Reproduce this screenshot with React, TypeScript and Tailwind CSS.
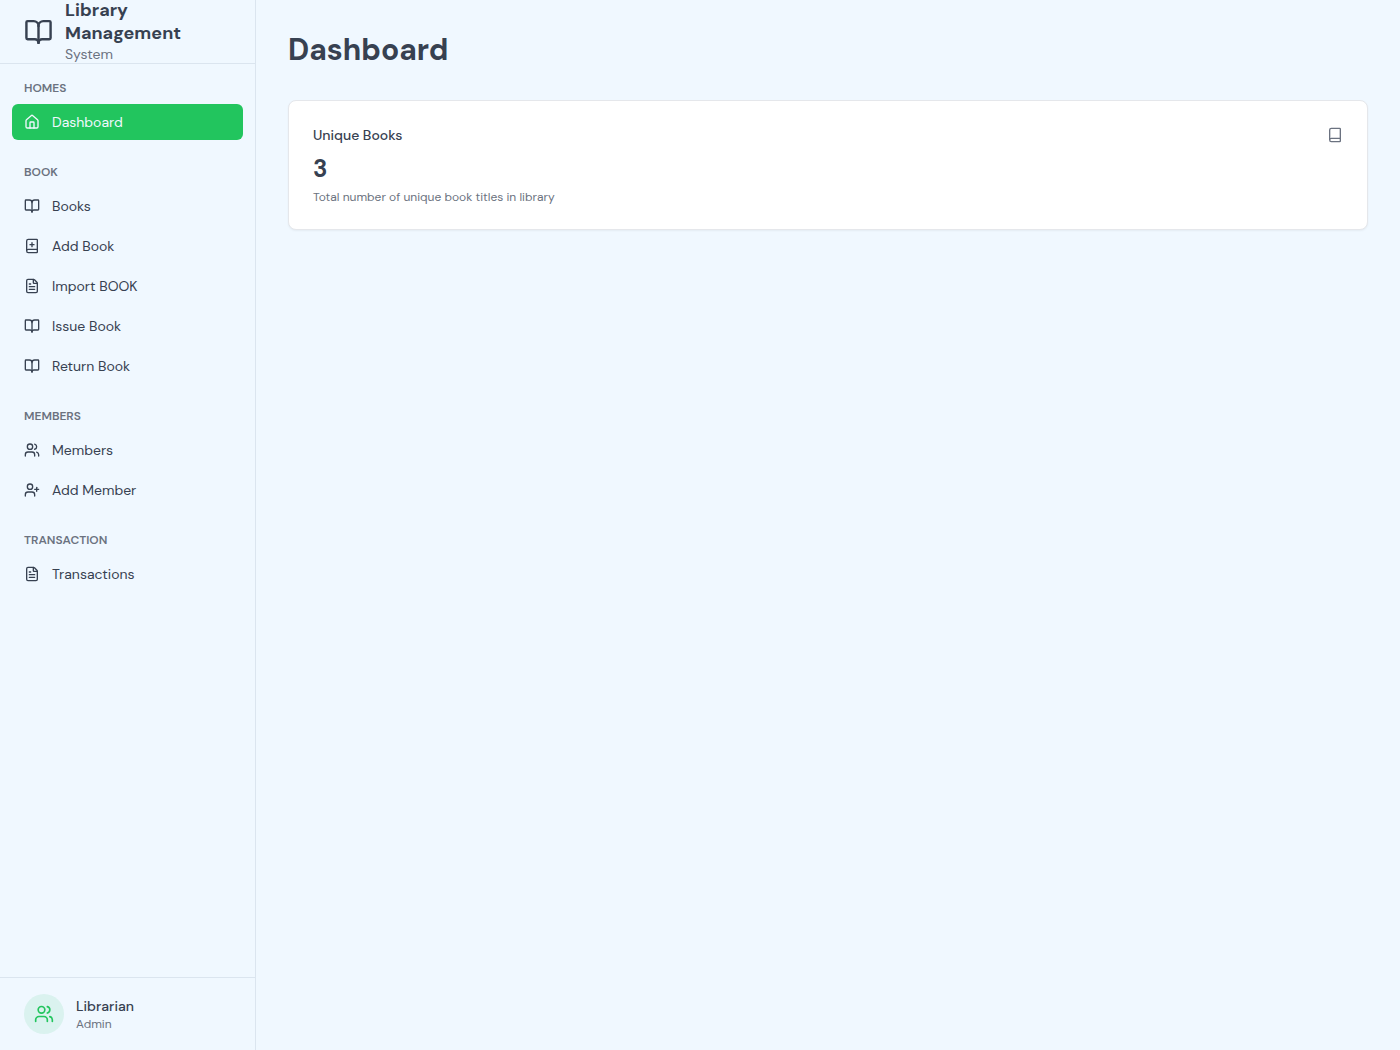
import {
  Book,
  BookOpen,
  BookPlus,
  FileText,
  House,
  UserPlus,
  Users,
  type LucideIcon,
} from 'lucide-react';

interface NavItem {
  label: string;
  icon: LucideIcon;
  active?: boolean;
}

interface NavGroup {
  title: string;
  items: NavItem[];
}

const navGroups: NavGroup[] = [
  { title: 'HOMES', items: [{ label: 'Dashboard', icon: House, active: true }] },
  {
    title: 'BOOK',
    items: [
      { label: 'Books', icon: BookOpen },
      { label: 'Add Book', icon: BookPlus },
      { label: 'Import BOOK', icon: FileText },
      { label: 'Issue Book', icon: BookOpen },
      { label: 'Return Book', icon: BookOpen },
    ],
  },
  {
    title: 'MEMBERS',
    items: [
      { label: 'Members', icon: Users },
      { label: 'Add Member', icon: UserPlus },
    ],
  },
  { title: 'TRANSACTION', items: [{ label: 'Transactions', icon: FileText }] },
];

const Sidebar = () => {
  return (
    <aside className="sticky top-0 flex h-screen w-64 shrink-0 flex-col border-r border-[#dbe5ef]">
      {/* Logo */}
      <div className="flex h-16 shrink-0 items-center gap-3 border-b border-[#dbe5ef] px-6">
        <BookOpen className="h-8 w-8" />
        <div>
          <div className="text-lg leading-tight font-bold">Library Management</div>
          <div className="text-sm text-[#6b7280]">System</div>
        </div>
      </div>

      {/* Navigation */}
      <nav className="flex flex-1 flex-col gap-6 overflow-y-auto px-3 py-4">
        {navGroups.map((group) => (
          <div key={group.title}>
            <h3 className="mb-2 px-3 text-xs font-semibold text-[#6b7280]">{group.title}</h3>
            <ul className="space-y-1">
              {group.items.map(({ label, icon: Icon, active }) => (
                <li key={label}>
                  <a
                    href="#"
                    className={`flex items-center gap-3 rounded-md px-3 py-2 text-sm ${
                      active ? 'bg-[#22c55e] text-[#f0f8ff]' : 'hover:bg-green-100'
                    }`}
                  >
                    <Icon className="h-4 w-4" />
                    {label}
                  </a>
                </li>
              ))}
            </ul>
          </div>
        ))}
      </nav>

      {/* Current user */}
      <div className="flex items-center gap-3 border-t border-[#dbe5ef] px-6 py-4">
        <div className="flex h-10 w-10 items-center justify-center rounded-full bg-[#22c55e]/10">
          <Users className="h-5 w-5 text-[#22c55e]" />
        </div>
        <div>
          <p className="text-sm font-medium">Librarian</p>
          <p className="text-xs text-[#6b7280]">Admin</p>
        </div>
      </div>
    </aside>
  );
};

export default function App() {
  return (
    <div className="flex min-h-screen bg-[#f0f8ff] font-['DM_Sans','Open_Sans',sans-serif] text-[#374151]">
      <Sidebar />
      <main className="flex-1 p-8">
        <h1 className="mb-8 text-3xl font-bold">Dashboard</h1>
        <section className="rounded-lg border border-[#e5e7eb] bg-white p-6 shadow-xs">
          <div className="flex items-center justify-between pb-2">
            <h2 className="text-sm font-medium">Unique Books</h2>
            <Book className="h-4 w-4 text-[#6b7280]" />
          </div>
          <div className="text-2xl font-bold">3</div>
          <p className="mt-1 text-xs text-[#6b7280]">Total number of unique book titles in library</p>
        </section>
      </main>
    </div>
  );
}
